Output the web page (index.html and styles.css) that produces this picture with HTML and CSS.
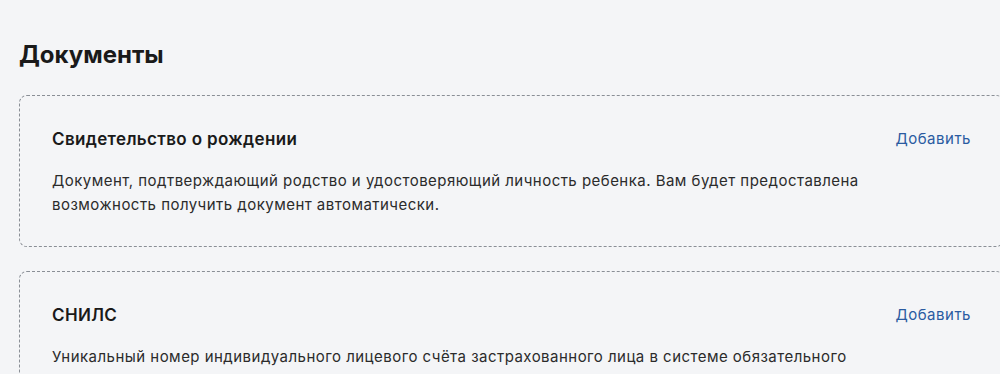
FILE: index.html
```html
<!DOCTYPE html>
<html lang="ru">
<head>
<meta charset="utf-8">
<link rel="stylesheet" href="styles.css">
</head>
<body>
<main class="page">
  <h1 class="title">Документы</h1>
  <section class="card">
    <div class="card-head">
      <h2 class="card-title">Свидетельство о рождении</h2>
      <a class="card-action" href="#">Добавить</a>
    </div>
    <p class="card-text">Документ, подтверждающий родство и удостоверяющий личность ребенка. Вам будет предоставлена возможность получить документ автоматически.</p>
  </section>
  <section class="card">
    <div class="card-head">
      <h2 class="card-title">СНИЛС</h2>
      <a class="card-action" href="#">Добавить</a>
    </div>
    <p class="card-text">Уникальный номер индивидуального лицевого счёта застрахованного лица в системе обязательного пенсионного страхования.</p>
  </section>
</main>
</body>
</html>
```

FILE: styles.css
```css
html, body {
  margin: 0;
  padding: 0;
  background: #f4f5f7;
  overflow: hidden;
}
body {
  font-family: "Inter", "Lato", "Liberation Sans", sans-serif;
  color: #0b1f33;
}
.page {
  width: 985px;
  padding: 39px 0 0 19px;
  display: flex;
  flex-direction: column;
  gap: 24px;
}
.title {
  margin: 0;
  font-size: 24px;
  line-height: 32px;
  font-weight: 700;
  color: #1a1a1a;
}
.card {
  border: 1px dashed #8a8f96;
  border-radius: 8px;
  padding: 31px 32px 29px 32px;
}
.card-head {
  display: flex;
  justify-content: space-between;
  align-items: center;
}
.card-title {
  margin: 0;
  font-size: 17px;
  line-height: 24px;
  font-weight: 600;
  letter-spacing: 0.35px;
  color: #1a1a1a;
}
.card-action {
  font-size: 15px;
  line-height: 24px;
  letter-spacing: 0.5px;
  color: #2a5ba1;
  text-decoration: none;
}
.card-text {
  margin: 18px 0 0;
  font-size: 15px;
  line-height: 24px;
  letter-spacing: 0.47px;
  color: #2b2b2b;
  max-width: 830px;
}
```
